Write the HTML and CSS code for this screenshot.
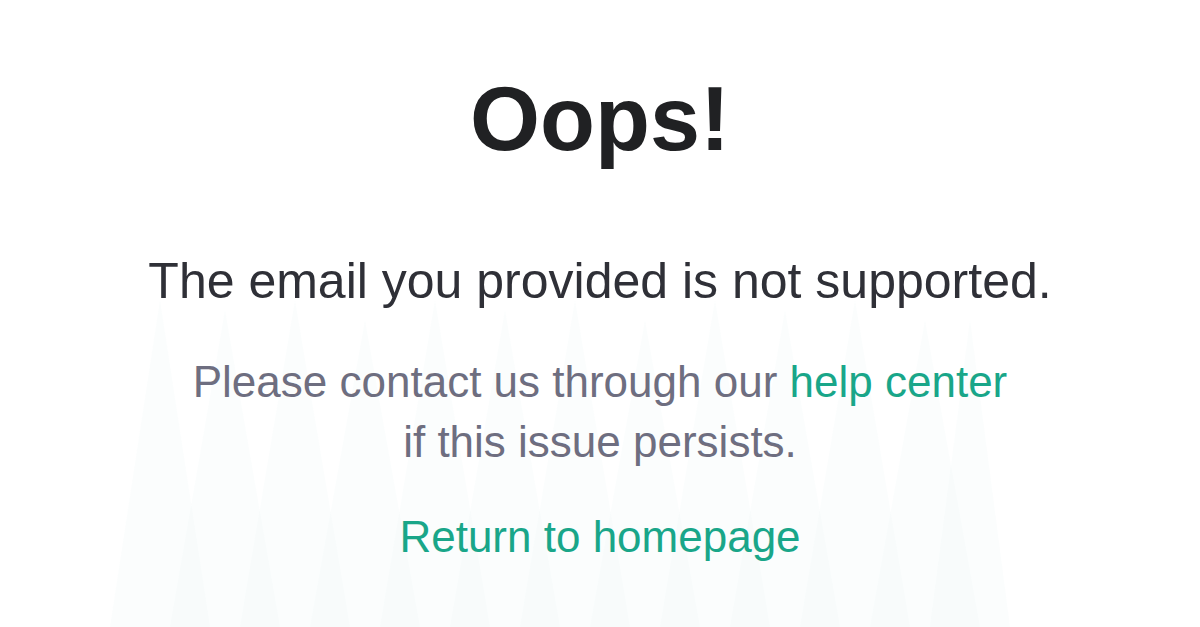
FILE: index.html
```html
<!DOCTYPE html>
<html lang="en">
<head>
<meta charset="utf-8">
<title>Oops!</title>
<link rel="stylesheet" href="styles.css">
</head>
<body>
<main class="page">
  <h1 class="title">Oops!</h1>
  <p class="lead">The email you provided is not supported.</p>
  <p class="info">Please contact us through our <a class="link" href="#">help center</a><br>if this issue persists.</p>
  <a class="link home" href="#">Return to homepage</a>
</main>
</body>
</html>
```
FILE: styles.css
```css
html, body {
  margin: 0;
  padding: 0;
  background: #ffffff;
}
body {
  width: 1200px;
  height: 627px;
  overflow: hidden;
  font-family: "Liberation Sans", Arial, sans-serif;
}
.page {
  height: 627px;
  display: flex;
  flex-direction: column;
  align-items: center;
  text-align: center;
  background-image: url("data:image/svg+xml;utf8,<svg xmlns='http://www.w3.org/2000/svg' width='1200' height='627'><g fill='%23eef6f4' fill-opacity='0.22'><polygon points='110,627 160,300 210,627'/><polygon points='170,627 225,310 280,627'/><polygon points='240,627 295,300 350,627'/><polygon points='310,627 365,320 420,627'/><polygon points='380,627 435,300 490,627'/><polygon points='450,627 505,310 560,627'/><polygon points='520,627 575,300 630,627'/><polygon points='590,627 645,320 700,627'/><polygon points='660,627 715,300 770,627'/><polygon points='730,627 785,310 840,627'/><polygon points='800,627 855,300 910,627'/><polygon points='870,627 925,320 980,627'/><polygon points='930,627 970,320 1010,627'/></g></svg>");
  background-repeat: no-repeat;
}
.title {
  margin: 69px 0 0;
  font-size: 90px;
  line-height: 100px;
  font-weight: 700;
  color: #202123;
}
.lead {
  margin: 82px 0 0;
  font-size: 50px;
  line-height: 60px;
  color: #2f3037;
  font-weight: 400;
}
.info {
  margin: 41px 0 0;
  font-size: 44px;
  line-height: 60px;
  color: #6e6e80;
}
.link {
  color: #19a689;
  text-decoration: none;
}
.home {
  margin-top: 35px;
  font-size: 44px;
  line-height: 60px;
}
```
